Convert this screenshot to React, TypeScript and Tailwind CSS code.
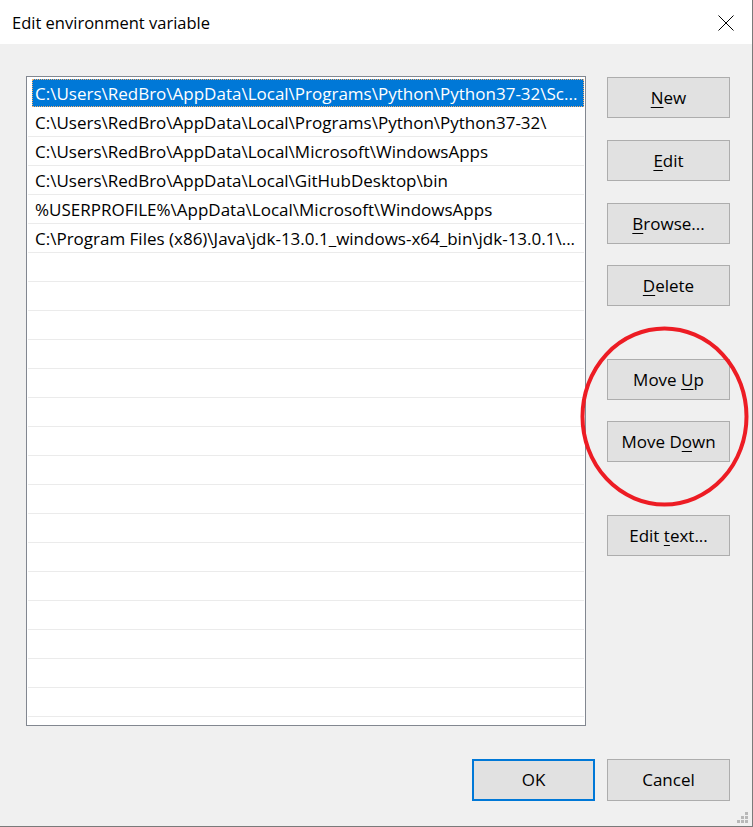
import React from 'react'

const rows = [
  'C:\\Users\\RedBro\\AppData\\Local\\Programs\\Python\\Python37-32\\Sc...',
  'C:\\Users\\RedBro\\AppData\\Local\\Programs\\Python\\Python37-32\\',
  'C:\\Users\\RedBro\\AppData\\Local\\Microsoft\\WindowsApps',
  'C:\\Users\\RedBro\\AppData\\Local\\GitHubDesktop\\bin',
  '%USERPROFILE%\\AppData\\Local\\Microsoft\\WindowsApps',
  'C:\\Program Files (x86)\\Java\\jdk-13.0.1_windows-x64_bin\\jdk-13.0.1\\...',
]

const TOTAL_ROWS = 22

function Btn({ children, className = '' }: { children: React.ReactNode; className?: string }) {
  return (
    <div
      className={`flex h-[41px] w-[123px] items-center justify-center border border-[#adadad] bg-[#e1e1e1] text-[17px] text-black ${className}`}
    >
      {children}
    </div>
  )
}

function Key({ children }: { children: React.ReactNode }) {
  return <span className="underline underline-offset-[3px]">{children}</span>
}

export default function App() {
  return (
    <div className="relative h-[827px] w-[753px] overflow-hidden border-r border-b border-[#7a7a7a] bg-[#f0f0f0] font-['Open_Sans','Noto_Sans',sans-serif]">
      {/* title bar */}
      <div className="flex h-[44px] items-center justify-between bg-white pl-[12px] pr-[18px]">
        <span className="pt-[2px] text-[16.5px] text-black">Edit environment variable</span>
        <svg width="16" height="16" viewBox="0 0 16 16" className="mt-[1px]">
          <path d="M0.5 0.5 L15.5 15.5 M15.5 0.5 L0.5 15.5" stroke="#000" strokeWidth="1" />
        </svg>
      </div>

      <div className="flex pl-[26px] pt-[32px]">
        {/* list */}
        <div className="h-[650px] w-[560px] overflow-hidden border border-[#828790] bg-white pt-[2px]">
          {Array.from({ length: TOTAL_ROWS }).map((_, i) => {
            const text = rows[i]
            const selected = i === 0
            return (
              <div key={i} className="flex h-[29px] flex-col pl-[1px] pr-[1px]">
                <div
                  className={`flex h-[28px] items-center overflow-hidden whitespace-nowrap pt-[1px] text-[17px] ${
                    selected
                      ? 'ml-[4px] border border-dotted border-[#f5b070] bg-[#0078d7] pl-[2px] text-white'
                      : 'pl-[7px] text-black'
                  }`}
                >
                  {text}
                </div>
                <div className={`h-px ${selected ? 'bg-white' : 'bg-[#ebebeb]'}`} />
              </div>
            )
          })}
        </div>

        {/* side buttons */}
        <div className="ml-[21px] flex flex-col pt-[1px]">
          <Btn><span><Key>N</Key>ew</span></Btn>
          <Btn className="mt-[22px]"><span><Key>E</Key>dit</span></Btn>
          <Btn className="mt-[22px]"><span><Key>B</Key>rowse...</span></Btn>
          <Btn className="mt-[21px]"><span><Key>D</Key>elete</span></Btn>
          <Btn className="mt-[53px]"><span>Move <Key>U</Key>p</span></Btn>
          <Btn className="mt-[21px]"><span>Move D<Key>o</Key>wn</span></Btn>
          <Btn className="mt-[53px]"><span>Edit <Key>t</Key>ext...</span></Btn>
        </div>
      </div>

      {/* bottom buttons */}
      <div className="flex justify-end gap-[12px] pr-[22px] pt-[33px]">
        <div className="flex h-[42px] w-[123px] items-center justify-center border-2 border-[#0078d7] bg-[#e1e1e1] text-[17px] text-black">
          OK
        </div>
        <div className="flex h-[42px] w-[123px] items-center justify-center border border-[#adadad] bg-[#e1e1e1] text-[17px] text-black">
          Cancel
        </div>
      </div>

      {/* red annotation circle */}
      <svg className="pointer-events-none absolute left-[580px] top-[326px]" width="170" height="182" viewBox="0 0 170 182">
        <ellipse cx="84.5" cy="90.5" rx="82" ry="88" fill="none" stroke="#ed1c24" strokeWidth="4" />
      </svg>

      {/* resize grip */}
      <svg className="absolute left-[737px] top-[812px]" width="12" height="12" viewBox="0 0 12 12">
        <rect x="8" y="0" width="3" height="3" fill="#b8b8b8" />
        <rect x="4" y="4" width="3" height="3" fill="#b8b8b8" />
        <rect x="8" y="4" width="3" height="3" fill="#b8b8b8" />
        <rect x="0" y="8" width="3" height="3" fill="#b8b8b8" />
        <rect x="4" y="8" width="3" height="3" fill="#b8b8b8" />
        <rect x="8" y="8" width="3" height="3" fill="#b8b8b8" />
      </svg>
    </div>
  )
}
